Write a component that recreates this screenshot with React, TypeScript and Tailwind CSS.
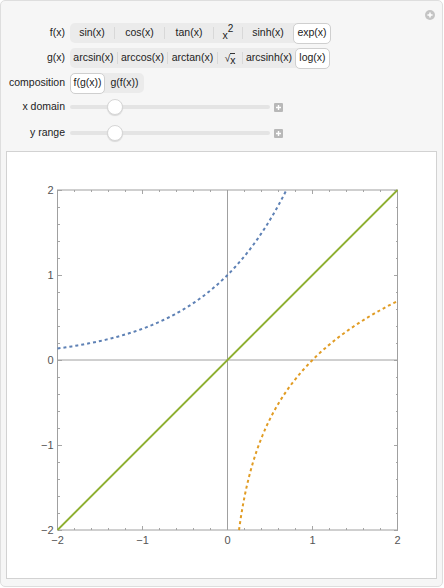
import React from "react";

const F_BUTTONS = [
  { label: "sin(x)", w: "w-[44px]" },
  { label: "cos(x)", w: "w-[49px]" },
  { label: "tan(x)", w: "w-[48px]" },
  { label: "x2", w: "w-[28px]" },
  { label: "sinh(x)", w: "w-[50px]" },
];

const G_BUTTONS = [
  { label: "arcsin(x)", w: "w-[47px]" },
  { label: "arccos(x)", w: "w-[49px]" },
  { label: "arctan(x)", w: "w-[49px]" },
  { label: "sqrt", w: "w-[24px]" },
  { label: "arcsinh(x)", w: "w-[52px]" },
];

// plot geometry inside the white panel
const X0 = 220.5;
const Y0 = 208;
const U = 85;
const px = (x: number) => X0 + x * U;
const py = (y: number) => Y0 - y * U;

function curve(fn: (x: number) => number, a: number, b: number) {
  const pts: string[] = [];
  const n = 80;
  for (let i = 0; i <= n; i++) {
    const x = a + ((b - a) * i) / n;
    pts.push(`${px(x).toFixed(2)},${py(fn(x)).toFixed(2)}`);
  }
  return "M" + pts.join(" L");
}

function ButtonLabel({ label }: { label: string }) {
  if (label === "x2")
    return (
      <span className="flex items-start pt-[2px]">
        <span className="pt-[4px]">x</span>
        <span className="text-[10px] leading-[10px]">2</span>
      </span>
    );
  if (label === "sqrt")
    return (
      <span className="flex items-end">
        <span className="text-[10px]">√</span>
        <span className="border-t border-[#333] leading-[12px]">x</span>
      </span>
    );
  return <span>{label}</span>;
}

function ButtonBar({
  items,
  selected,
  selectedW,
}: {
  items: { label: string; w: string }[];
  selected: string;
  selectedW: string;
}) {
  return (
    <div className="flex h-[20px] items-center rounded-[5px] bg-[#ebebeb]">
      {items.map((b, i) => (
        <div key={b.label} className="flex h-full items-center">
          <div className={`flex h-full items-center justify-center ${b.w}`}>
            <ButtonLabel label={b.label} />
          </div>
          {i < items.length - 1 && <div className="h-[12px] w-px bg-[#d8d8d8]" />}
        </div>
      ))}
      <div
        className={`flex h-[21px] ${selectedW} items-center justify-center rounded-[5px] border border-[#cfcfcf] bg-white`}
      >
        {selected}
      </div>
    </div>
  );
}

function Slider() {
  return (
    <div className="flex items-center gap-[4px]">
      <div className="relative flex h-[16px] w-[200px] items-center">
        <div className="h-[4px] w-full rounded-full bg-[#e4e4e4]" />
        <div className="absolute left-[37px] top-0 h-[16px] w-[16px] rounded-full border border-[#d6d6d6] bg-white shadow-[0_1px_1px_rgba(0,0,0,0.12)]" />
      </div>
      <svg width="9" height="9" viewBox="0 0 9 9">
        <rect x="0" y="0" width="9" height="9" rx="1" fill="#b8b8b8" />
        <path d="M4.5 2 V7 M2 4.5 H7" stroke="#fff" strokeWidth="1.4" />
      </svg>
    </div>
  );
}

function Plot() {
  const left = px(-2);
  const right = px(2);
  const top = py(2);
  const bottom = py(-2);
  const ticks: React.ReactNode[] = [];
  for (let i = 0; i <= 20; i++) {
    const v = -2 + i * 0.2;
    const major = i % 5 === 0;
    const len = major ? 4 : 2;
    const x = px(v);
    const y = py(v);
    ticks.push(
      <path
        key={"t" + i}
        d={`M${x},${bottom} V${bottom - len} M${x},${top} V${top + len} M${left},${y} H${left + len} M${right},${y} H${right - len}`}
      />
    );
  }
  const labels = [-2, -1, 0, 1, 2];
  const fmt = (v: number) => (v < 0 ? "−" + Math.abs(v) : String(v));
  return (
    <svg width="429" height="426" viewBox="0 0 429 426" className="block">
      <g stroke="#a6a6a6" strokeWidth="1" fill="none" shapeRendering="crispEdges">
        {ticks}
      </g>
      <g stroke="#a0a0a0" strokeWidth="1" fill="none">
        <path d={`M${px(0)},${top} V${bottom}`} />
        <path d={`M${left},${py(0)} H${right}`} />
        <rect x={left} y={top} width={right - left} height={bottom - top} />
      </g>
      <path d={curve((x) => x, -2, 2)} stroke="#8fb032" strokeWidth="1.8" fill="none" />
      <path
        d={curve(Math.exp, -2, Math.log(2))}
        stroke="#5e81b5"
        strokeWidth="2"
        strokeDasharray="3 3"
        fill="none"
      />
      <path
        d={curve(Math.log, Math.exp(-2), 2)}
        stroke="#e19c24"
        strokeWidth="2"
        strokeDasharray="3 3"
        fill="none"
      />
      <g fill="#555" fontSize="11" fontFamily="'Liberation Sans', Arial, sans-serif">
        {labels.map((v) => (
          <text key={"y" + v} x={left - 4} y={py(v) + 4} textAnchor="end">
            {fmt(v)}
          </text>
        ))}
        {labels.map((v) => (
          <text key={"x" + v} x={px(v)} y={bottom + 14} textAnchor="middle">
            {fmt(v)}
          </text>
        ))}
      </g>
    </svg>
  );
}

export default function App() {
  return (
    <div className="h-[588px] w-[444px] bg-white font-['Liberation_Sans',Arial,sans-serif] text-[10.5px] text-[#222]">
      <div className="relative flex h-[587px] w-[443px] flex-col rounded-[5px] border border-[#dedede] bg-[#f6f6f6] px-[5px] pt-[22px]">
        <svg className="absolute right-[7px] top-[9px]" width="10" height="10" viewBox="0 0 10 10">
          <circle cx="5" cy="5" r="5" fill="#c4c4c4" />
          <path d="M5 2.4 V7.6 M2.4 5 H7.6" stroke="#fff" strokeWidth="1.5" />
        </svg>

        <div className="flex flex-col gap-[5px]">
          <div className="flex items-center gap-[5px]">
            <div className="w-[59px] text-right">f(x)</div>
            <ButtonBar items={F_BUTTONS} selected="exp(x)" selectedW="w-[38px]" />
          </div>
          <div className="flex items-center gap-[5px]">
            <div className="w-[59px] text-right">g(x)</div>
            <ButtonBar items={G_BUTTONS} selected="log(x)" selectedW="w-[35px]" />
          </div>
          <div className="flex items-center gap-[5px]">
            <div className="w-[59px] text-right">composition</div>
            <div className="flex h-[20px] items-center rounded-[5px] bg-[#ebebeb]">
              <div className="flex h-[21px] w-[35px] items-center justify-center rounded-[5px] border border-[#cfcfcf] bg-white">
                f(g(x))
              </div>
              <div className="flex h-full w-[39px] items-center justify-center">g(f(x))</div>
            </div>
          </div>
        </div>

        <div className="mt-[6px] flex flex-col gap-[10px]">
          <div className="flex items-center gap-[5px]">
            <div className="w-[59px] text-right">x domain</div>
            <Slider />
          </div>
          <div className="flex items-center gap-[5px]">
            <div className="w-[59px] text-right">y range</div>
            <Slider />
          </div>
        </div>

        <div className="mt-[10px] w-[431px] border border-[#d2d2d2] bg-white">
          <Plot />
        </div>
      </div>
    </div>
  );
}
